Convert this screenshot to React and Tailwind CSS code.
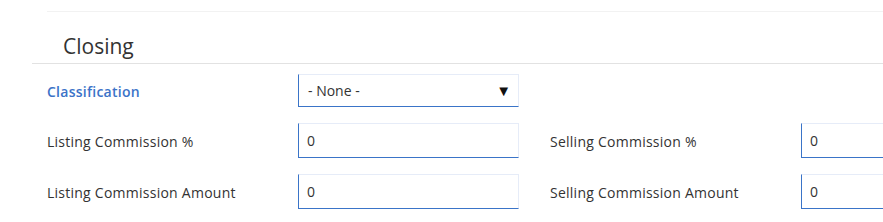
import React from "react";

const font = { fontFamily: '"Open Sans", "Noto Sans", sans-serif' };

function Field({ value, width = "w-[221px]" }) {
  return (
    <div
      className={`${width} shrink-0 h-[35px] flex items-center pl-[8px] bg-white border border-[#e6ecf8] border-l-[#3a74c8] border-b-[#3a74c8] text-[14px] text-[#333]`}
    >
      {value}
    </div>
  );
}

function Label({ children, className = "text-[#333]" }) {
  return (
    <div className={`w-[251px] shrink-0 text-[14px] tracking-[0.25px] pt-[2px] ${className}`}>
      {children}
    </div>
  );
}

export default function App() {
  return (
    <div
      className="w-[883px] h-[222px] overflow-hidden bg-white text-[#333]"
      style={font}
    >
      <div className="pt-[11px]">
        <div className="ml-[47px] border-t border-[#f2f2f2]" />
      </div>
      <div className="ml-[32px] border-b border-[#e2e2e2] h-[52px] flex items-end pb-[3px]">
        <h2 className="ml-[31px] text-[21px] leading-[28px] text-[#333] font-normal">
          Closing
        </h2>
      </div>
      <div className="pl-[47px] pt-[10px] flex flex-col gap-[16px]">
        <div className="flex items-center h-[33px]">
          <Label className="font-semibold text-[#3b73c8]">Classification</Label>
          <div className="w-[221px] shrink-0 h-[33px] flex items-center justify-between pl-[9px] pr-[7px] bg-white border border-[#e6ecf8] border-l-[#3a74c8] border-b-[#3a74c8] text-[14px] text-[#333]">
            <span>- None -</span>
            <span className="text-[15px] text-[#111]">▼</span>
          </div>
        </div>
        <div className="flex items-center">
          <Label>Listing Commission %</Label>
          <Field value="0" />
          <Label className="ml-[31px] text-[#333]">Selling Commission %</Label>
          <Field value="0" width="w-[120px]" />
        </div>
        <div className="flex items-center">
          <Label>Listing Commission Amount</Label>
          <Field value="0" />
          <Label className="ml-[31px] text-[#333]">Selling Commission Amount</Label>
          <Field value="0" width="w-[120px]" />
        </div>
      </div>
    </div>
  );
}
